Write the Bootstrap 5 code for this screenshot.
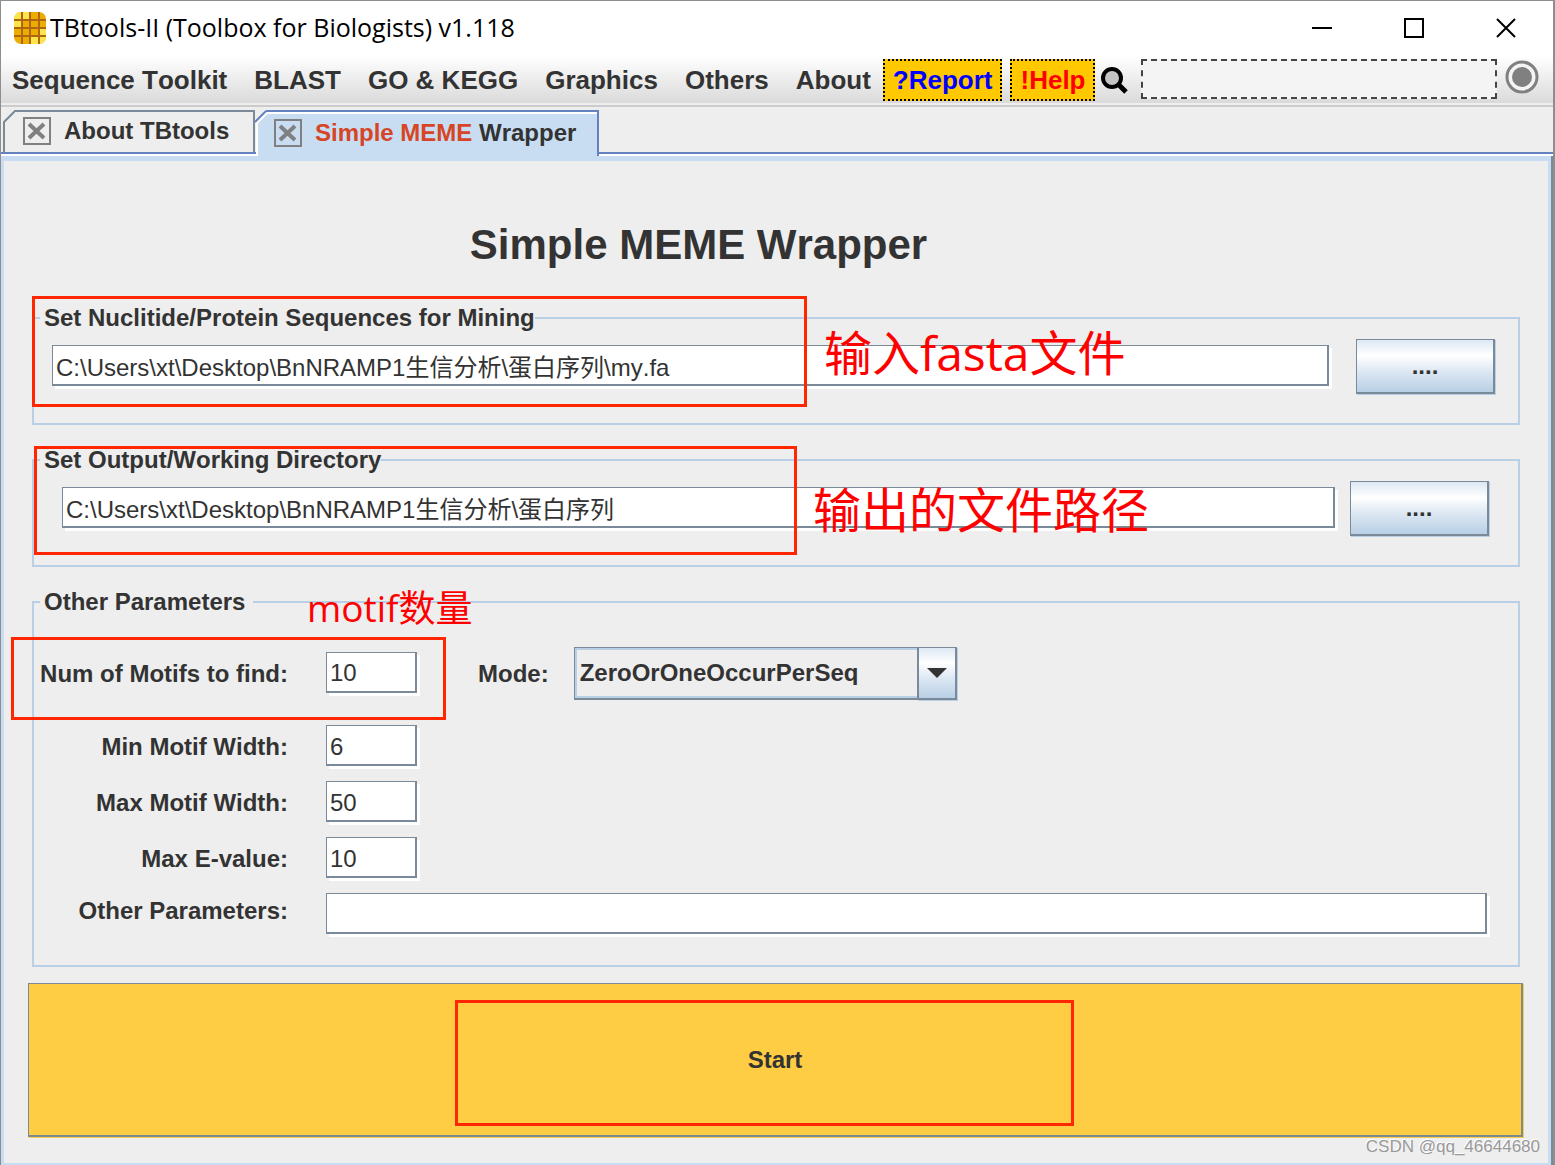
<!DOCTYPE html>
<html lang="en">
<head>
<meta charset="utf-8">
<meta name="viewport" content="width=device-width, initial-scale=1">
<title>TBtools-II (Toolbox for Biologists) v1.118</title>
<link href="https://cdn.jsdelivr.net/npm/bootstrap@5.3.0/dist/css/bootstrap.min.css" rel="stylesheet">
<style>
:root{--slate:#7a8a99;--sky:#c8ddf2;--rim:#b8cfe5;--ink:#333;--face:#eee;--tabline:#6382bf;--mark:#ff2600}
body{background:var(--face);color:var(--ink);font-family:"Liberation Sans","Noto Sans CJK SC",sans-serif;font-size:24px;line-height:24px;font-kerning:none}
button,input,select{font:inherit;color:inherit;border-radius:0}
svg{display:block;flex:none}
.window{min-height:100vh;border:solid #8e8e8e;border-width:1px 2px 0 1px}
.titlebar{height:55px;background:#fff;padding:0 1px 2px 13px;color:#000;font-family:"Open Sans","Noto Sans",sans-serif}
.titlebar h1{font-size:25px;line-height:30px;font-weight:400;padding-bottom:2px}
.winbtn{width:92px;height:53px;background:none;border:0;color:#000}
.menubar{height:51px;padding:3px 14px 0 11px;background:linear-gradient(#fff,#dadada 47px,#eee 47px,#eee 49px,#ccc 49px);font-size:26px;font-weight:700}
.menubar a{color:var(--ink);text-decoration:none;line-height:42px}
.menus{gap:27px;margin-right:12px;flex:none}
.hot{height:42px;line-height:34px;padding:0 8px;background:#ffc800;border:2px dotted #000;font-weight:700}
.hot-report{color:#00f}
.hot-help{color:#f00}
.search{flex:1 1 0;height:40px;min-width:0;margin:0 8px 0 12px;background:#f4f4f4;border:2px dashed #444;outline:0}
.tabbar{padding:3px 0 0 2px;background:linear-gradient(var(--tabline) 2px,#fff 2px) bottom/100% 4px no-repeat}
.tabitem{position:relative;padding:0 21px 0 20px;font-weight:700;background:none;border:0;line-height:24px}
.tabitem .edge{position:absolute;left:0;top:0}
.tab-off{height:42px;width:252px;color:var(--ink)}
.tab-body{border:solid var(--slate);border-width:2px 2px 0 0;position:absolute;inset:0 0 0 11px}
.tab-on{height:46px;width:344px;padding-left:19px}
.tab-on .tab-body{border-color:var(--tabline);background:linear-gradient(#fff 2px,var(--sky) 2px)}
.tabitem>.inner{position:relative;gap:13px}
.hotword{color:#d64525}
.pane{border:solid var(--sky);border-width:5px 3px 2px 3px;padding:0 25px 25px 24px}
.pane-wrap{border-right:2px solid var(--slate)}
.headline{font-size:42px;line-height:48px;font-weight:700;margin:60px 0 37px;padding-right:154px}
.group{border:2px solid var(--rim);padding:0;margin:0}
.group legend{font-size:24px;line-height:24px;font-weight:700;margin:0 0 0 6px;padding:0 0 0 4px}
.stack{gap:23px;padding:0 3px 0 4px}
.field{height:41px;min-width:0;margin:0 3px 3px 0;padding:0 3px;background:#fff;border:solid var(--slate);border-width:1px 2px 2px 1px;box-shadow:3px 3px 0 #fff;outline:0}
.short{width:91px;padding-top:3px}
.steel{background:linear-gradient(#dde8f3,#fff 30%,#dde8f3 60%,#b8cfe5)}
.browse{width:139px;height:55px;margin:0 1px 1px 0;border:solid var(--slate);border-width:1px 2px 2px 1px;box-shadow:1px 1px 0 var(--rim);font-weight:700}
.row-in{padding:9px 22px 28px 18px;gap:24px}
.row-out{padding:9px 28px 28px 28px;gap:12px}
.params{display:grid;grid-template-columns:254px 1fr;column-gap:38px;row-gap:12px;padding:33px 28px 28px 0;align-items:center}
.params label{font-weight:700}
.params .first{padding-bottom:13px}
.mode-label{padding-left:58px}
.combo{width:383px;height:53px;margin-left:25px}
.combo select{appearance:none;width:100%;height:100%;padding:0 44px 0 5px;background:var(--face);border:solid var(--slate);border-width:1px 2px 2px 1px;box-shadow:inset 0 0 0 2px var(--rim);font-weight:700;outline:0}
.combo .drop{position:absolute;right:0;top:0;width:40px;height:53px;border:solid var(--slate);border-width:1px 2px 2px 2px;box-shadow:1px 1px 0 var(--rim);pointer-events:none}
.start{width:100%;height:154px;background:#ffcd43;border:solid var(--slate);border-width:1px 2px 2px 1px;box-shadow:1px 1px 0 #ffcd43;font-weight:700}
.frame{position:absolute;border:3px solid var(--mark);pointer-events:none}
.note{position:absolute;color:#f00;white-space:nowrap;font-family:"Open Sans","Noto Sans CJK SC",sans-serif;font-size:48px;line-height:48px;pointer-events:none}
.f-in{left:0;top:-10px;width:775px;height:111px}
.n-in{left:792px;top:23px}
.f-out{left:2px;top:-2px;width:763px;height:109px}
.n-out{left:781px;top:38px}
.f-num{left:-21px;top:47px;width:435px;height:83px}
.n-num{left:275px;top:0;font-size:37px;line-height:36px}
.f-start{left:427px;top:17px;width:619px;height:126px}
.credit{position:absolute;right:13px;bottom:8px;font-size:17px;line-height:20px;color:#999;text-shadow:-1px -1px 0 #fff}
</style>
<script src="https://cdn.jsdelivr.net/npm/bootstrap@5.3.0/dist/js/bootstrap.bundle.min.js"></script>
</head>
<body>
<div class="window d-flex flex-column position-relative">
  <header class="titlebar d-flex align-items-center">
    <svg width="32" height="32" viewBox="0 0 32 32" aria-hidden="true">
      <defs><clipPath id="rounded"><rect width="32" height="32" rx="7"/></clipPath></defs>
      <g clip-path="url(#rounded)">
        <rect width="32" height="32" fill="#ebae00"/>
        <path fill="#fbe54b" d="M0 0h16v8H8v8H0zM24 16h8v16H16v-8h8z"/>
        <path fill="none" stroke="#b06512" stroke-width="2" d="M8 0v32M16 0v32M25 0v32M0 8h32M0 16h32M0 24h32"/>
      </g>
    </svg>
    <h1 class="mb-0 ms-1 me-auto">TBtools-II (Toolbox for Biologists) v1.118</h1>
    <button class="winbtn d-flex align-items-center justify-content-center p-0" type="button" aria-label="Minimize"><svg width="20" height="20"><path d="M0 10h20" stroke="#000" stroke-width="2"/></svg></button>
    <button class="winbtn d-flex align-items-center justify-content-center p-0" type="button" aria-label="Maximize"><svg width="20" height="20"><rect x="1" y="1" width="18" height="18" fill="none" stroke="#000" stroke-width="2"/></svg></button>
    <button class="winbtn d-flex align-items-center justify-content-center p-0" type="button" aria-label="Close"><svg width="20" height="20"><path d="M1 1l18 18M19 1L1 19" stroke="#000" stroke-width="2"/></svg></button>
  </header>
  <nav class="menubar d-flex align-items-start">
    <div class="menus d-flex text-nowrap">
      <a href="#">Sequence Toolkit</a><a href="#">BLAST</a><a href="#">GO &amp; KEGG</a><a href="#">Graphics</a><a href="#">Others</a><a href="#">About</a>
    </div>
    <button class="hot hot-report me-2" type="button">?Report</button>
    <button class="hot hot-help" type="button">!Help</button>
    <label for="find" class="ms-1 pt-2" aria-label="Search"><svg width="30" height="28" viewBox="0 0 30 28"><path d="M20 18l7 7" stroke="#000" stroke-width="5"/><circle cx="13" cy="11" r="9" fill="#c4c4c4" stroke="#000" stroke-width="4"/></svg></label>
    <input id="find" class="search" type="text">
    <svg width="34" height="36" viewBox="0 0 34 36" aria-hidden="true"><circle cx="17" cy="18" r="15" fill="#f4f4f4" stroke="#808080" stroke-width="3"/><circle cx="17" cy="18" r="10" fill="#808080"/></svg>
  </nav>
  <div class="tabbar d-flex align-items-start text-nowrap">
    <button class="tabitem tab-off" type="button">
      <span class="tab-body"></span>
      <svg class="edge" width="12" height="42"><path d="M1 42V12L12 1" fill="none" stroke="#7a8a99" stroke-width="2"/></svg>
      <span class="inner d-flex align-items-center">
        <svg width="28" height="28" viewBox="0 0 28 28"><rect x="1" y="1" width="26" height="26" fill="none" stroke="#808080" stroke-width="2"/><path d="M6 7l15 14M21 7L6 21" stroke="#808080" stroke-width="4"/></svg>
        <span>About TBtools</span>
      </span>
    </button>
    <button class="tabitem tab-on" type="button">
      <span class="tab-body"></span>
      <svg class="edge" width="12" height="46"><path d="M2 46V13L12 3V46z" fill="#c8ddf2"/><path d="M2 46V13L12 3" fill="none" stroke="#fff" stroke-width="2"/><path d="M0 12L11 1" stroke="#6382bf" stroke-width="2"/></svg>
      <span class="inner d-flex align-items-center">
        <svg width="28" height="28" viewBox="0 0 28 28"><rect x="1" y="1" width="26" height="26" fill="none" stroke="#808080" stroke-width="2"/><path d="M6 7l15 14M21 7L6 21" stroke="#808080" stroke-width="4"/></svg>
        <span><span class="hotword">Simple MEME</span> Wrapper</span>
      </span>
    </button>
  </div>
  <div class="pane-wrap flex-grow-1 d-flex">
  <main class="pane flex-grow-1">
    <h2 class="headline text-center">Simple MEME Wrapper</h2>
    <form>
      <div class="stack d-flex flex-column">
        <div class="position-relative">
          <fieldset class="group">
            <legend class="float-none w-auto">Set Nuclitide/Protein Sequences for Mining</legend>
            <div class="row-in d-flex align-items-center">
              <input class="field flex-grow-1" type="text" aria-label="Sequence file" value="C:\Users\xt\Desktop\BnNRAMP1生信分析\蛋白序列\my.fa">
              <button class="browse steel" type="button">....</button>
            </div>
          </fieldset>
          <div class="frame f-in"></div>
          <div class="note n-in">输入fasta文件</div>
        </div>
        <div class="position-relative">
          <fieldset class="group">
            <legend class="float-none w-auto">Set Output/Working Directory</legend>
            <div class="row-out d-flex align-items-center">
              <input class="field flex-grow-1" type="text" aria-label="Working directory" value="C:\Users\xt\Desktop\BnNRAMP1生信分析\蛋白序列">
              <button class="browse steel" type="button">....</button>
            </div>
          </fieldset>
          <div class="frame f-out"></div>
          <div class="note n-out">输出的文件路径</div>
        </div>
        <div class="position-relative">
          <fieldset class="group">
            <legend class="float-none w-auto pe-2">Other Parameters</legend>
            <div class="params">
              <label class="text-end first text-nowrap" for="num">Num of Motifs to find:</label>
              <div class="first d-flex align-items-center">
                <input id="num" class="field short" type="text" value="10">
                <label class="mode-label" for="mode">Mode:</label>
                <div class="combo position-relative">
                  <select id="mode"><option>ZeroOrOneOccurPerSeq</option></select>
                  <span class="drop steel d-flex align-items-center justify-content-center"><svg width="20" height="10"><path d="M0 0h20L10 10z" fill="#333"/></svg></span>
                </div>
              </div>
              <label class="text-end" for="minw">Min Motif Width:</label>
              <input id="minw" class="field short" type="text" value="6">
              <label class="text-end" for="maxw">Max Motif Width:</label>
              <input id="maxw" class="field short" type="text" value="50">
              <label class="text-end" for="evalue">Max E-value:</label>
              <input id="evalue" class="field short" type="text" value="10">
              <label class="text-end pb-2" for="other">Other Parameters:</label>
              <input id="other" class="field" type="text">
            </div>
          </fieldset>
          <div class="frame f-num"></div>
          <div class="note n-num">motif数量</div>
        </div>
      </div>
      <div class="position-relative mt-3">
        <button class="start d-block" type="button">Start</button>
        <div class="frame f-start"></div>
      </div>
    </form>
  </main>
  </div>
  <div class="credit">CSDN @qq_46644680</div>
</div>
</body>
</html>
